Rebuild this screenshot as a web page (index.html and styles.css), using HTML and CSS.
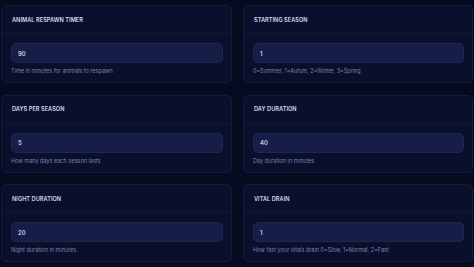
FILE: index.html
```html
<!DOCTYPE html>
<html>
<head>
<meta charset="utf-8">
<link rel="stylesheet" href="styles.css">
</head>
<body>
<div class="grid">
  <div class="card">
    <div class="card-head"><span class="title">ANIMAL RESPAWN TIMER</span></div>
    <div class="card-body">
      <div class="input">90</div>
      <div class="help">Time in minutes for animals to respawn</div>
    </div>
  </div>
  <div class="card">
    <div class="card-head"><span class="title">STARTING SEASON</span></div>
    <div class="card-body">
      <div class="input">1</div>
      <div class="help">0=Summer, 1=Autum, 2=Winter, 3=Spring</div>
    </div>
  </div>
  <div class="card">
    <div class="card-head"><span class="title">DAYS PER SEASON</span></div>
    <div class="card-body">
      <div class="input">5</div>
      <div class="help">How many days each season lasts</div>
    </div>
  </div>
  <div class="card">
    <div class="card-head"><span class="title">DAY DURATION</span></div>
    <div class="card-body">
      <div class="input">40</div>
      <div class="help">Day duration in minutes</div>
    </div>
  </div>
  <div class="card">
    <div class="card-head"><span class="title">NIGHT DURATION</span></div>
    <div class="card-body">
      <div class="input">20</div>
      <div class="help">Night duration in minutes</div>
    </div>
  </div>
  <div class="card">
    <div class="card-head"><span class="title">VITAL DRAIN</span></div>
    <div class="card-body">
      <div class="input">1</div>
      <div class="help">How fast your vitals drain 0=Slow, 1=Normal, 2=Fast</div>
    </div>
  </div>
</div>
</body>
</html>
```
FILE: styles.css
```css
html, body {
  margin: 0;
  padding: 0;
  background: #060a1f;
  font-family: Inter, "Noto Sans", sans-serif;
  width: 474px;
  height: 267px;
  overflow: hidden;
}
.grid {
  display: grid;
  grid-template-columns: 231px 230px;
  grid-auto-rows: 78px;
  column-gap: 11px;
  row-gap: 11.5px;
  padding: 5px 0 0 1px;
}
.card {
  background: #0a0f2c;
  border: 1px solid #141a3a;
  border-radius: 5px;
  box-sizing: border-box;
  display: flex;
  flex-direction: column;
}
.card-head {
  height: 28px;
  box-sizing: border-box;
  border-bottom: 1px solid #121834;
  display: flex;
  align-items: center;
  padding: 0 10px;
}
.title {
  color: #d9ddf0;
  font-size: 5.6px;
  font-weight: 600;
  letter-spacing: 0.05px;
}
.card-body {
  padding: 9px 8px 0 9px;
}
.input {
  height: 20px;
  box-sizing: border-box;
  background: #161e48;
  border: 1px solid #1e2652;
  border-radius: 5px;
  color: #e3e6f5;
  font-size: 6px;
  font-weight: 500;
  display: flex;
  align-items: center;
  padding: 0 6px;
}
.help {
  margin-top: 5px;
  color: #7d84a6;
  font-size: 5.5px;
  line-height: 7px;
}
```
